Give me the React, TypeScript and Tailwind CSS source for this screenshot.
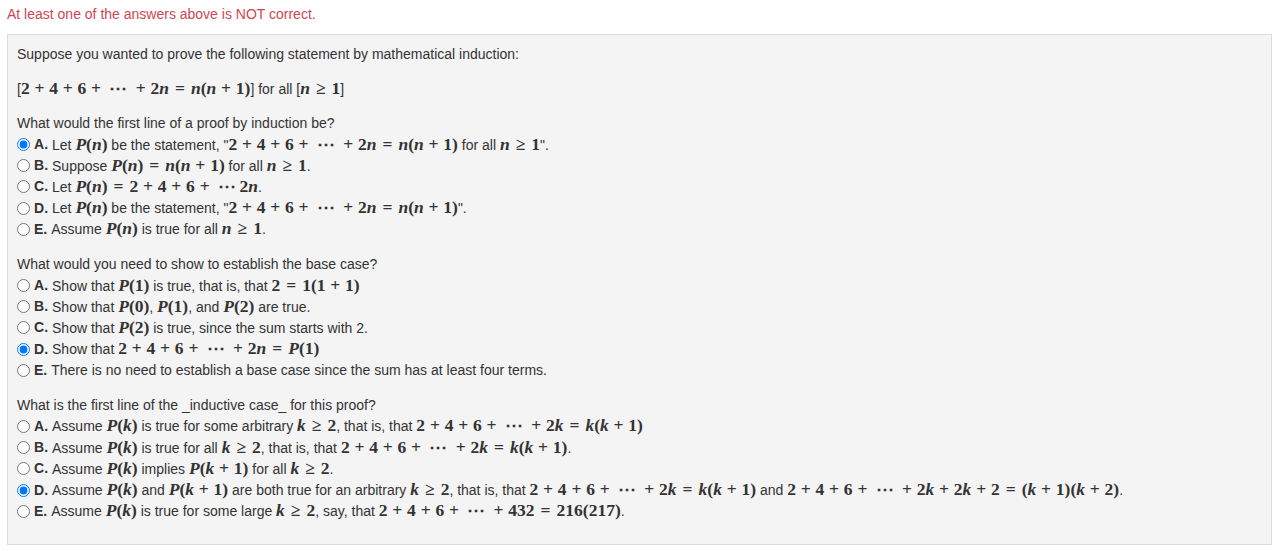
import React from 'react'

// tiny tex-ish renderer: letters italic, operators spaced
function M({ t }: { t: string }) {
  const parts: React.ReactNode[] = []
  for (let i = 0; i < t.length; i++) {
    const c = t[i]
    if (/[a-zA-Z]/.test(c)) {
      parts.push(<i key={i} className="italic">{c}</i>)
    } else if (c === '+') {
      parts.push(<span key={i} className="mx-[4.8px]">{c}</span>)
    } else if (c === '=' || c === '≥') {
      parts.push(<span key={i} className="mx-[6px]">{c}</span>)
    } else if (c === '⋯') {
      parts.push(<span key={i} className="mx-[3.5px]">{c}</span>)
    } else {
      parts.push(<span key={i}>{c}</span>)
    }
  }
  return (
    <span className="font-['Liberation_Serif',serif] font-bold text-[17.5px] leading-[20px] whitespace-nowrap">{parts}</span>
  )
}

type Opt = { key: string; body: React.ReactNode }

function Question({ title, options, picked, first }: { title: string; options: Opt[]; picked: string; first?: boolean }) {
  return (
    <div className={first ? 'mt-[13px]' : 'mt-[14px]'}>
      <p className="leading-[21px]">{title}</p>
      {options.map(o => (
        <label key={o.key} className="flex items-center h-[21.2px] whitespace-nowrap">
          <input type="radio" readOnly checked={o.key === picked} className="m-0 mr-[4px] w-[13px] h-[13px]" />
          <b className="font-bold">{o.key}.</b>
          <span className="ml-[4px]">{o.body}</span>
        </label>
      ))}
    </div>
  )
}

export default function App() {
  const q1: Opt[] = [
    { key: 'A', body: <>Let <M t="P(n)" /> be the statement, "<M t="2+4+6+⋯+2n=n(n+1)" /> for all <M t="n≥1" />".</> },
    { key: 'B', body: <>Suppose <M t="P(n)=n(n+1)" /> for all <M t="n≥1" />.</> },
    { key: 'C', body: <>Let <M t="P(n)=2+4+6+⋯2n" />.</> },
    { key: 'D', body: <>Let <M t="P(n)" /> be the statement, "<M t="2+4+6+⋯+2n=n(n+1)" />".</> },
    { key: 'E', body: <>Assume <M t="P(n)" /> is true for all <M t="n≥1" />.</> },
  ]
  const q2: Opt[] = [
    { key: 'A', body: <>Show that <M t="P(1)" /> is true, that is, that <M t="2=1(1+1)" /></> },
    { key: 'B', body: <>Show that <M t="P(0)" />, <M t="P(1)" />, and <M t="P(2)" /> are true.</> },
    { key: 'C', body: <>Show that <M t="P(2)" /> is true, since the sum starts with 2.</> },
    { key: 'D', body: <>Show that <M t="2+4+6+⋯+2n=P(1)" /></> },
    { key: 'E', body: <>There is no need to establish a base case since the sum has at least four terms.</> },
  ]
  const q3: Opt[] = [
    { key: 'A', body: <>Assume <M t="P(k)" /> is true for some arbitrary <M t="k≥2" />, that is, that <M t="2+4+6+⋯+2k=k(k+1)" /></> },
    { key: 'B', body: <>Assume <M t="P(k)" /> is true for all <M t="k≥2" />, that is, that <M t="2+4+6+⋯+2k=k(k+1)" />.</> },
    { key: 'C', body: <>Assume <M t="P(k)" /> implies <M t="P(k+1)" /> for all <M t="k≥2" />.</> },
    {
      key: 'D',
      body: (
        <>
          Assume <M t="P(k)" /> and <M t="P(k+1)" /> are both true for an arbitrary <M t="k≥2" />, that is, that{' '}
          <M t="2+4+6+⋯+2k=k(k+1)" /> and <M t="2+4+6+⋯+2k+2k+2=(k+1)(k+2)" />.
        </>
      ),
    },
    { key: 'E', body: <>Assume <M t="P(k)" /> is true for some large <M t="k≥2" />, say, that <M t="2+4+6+⋯+432=216(217)" />.</> },
  ]

  return (
    <div className="font-['Liberation_Sans',Arial,sans-serif] text-[14px] text-[#333] bg-white min-h-[551px] pt-[4px]">
      <p className="pl-[7px] leading-[20px] text-[#cf4652]">At least one of the answers above is NOT correct.</p>
      <div className="mt-[10px] ml-[7px] bg-[#f4f4f4] border border-[#dcdcdc] px-[9px] pt-[9px] pb-[22px]">
        <p className="leading-[21px]">Suppose you wanted to prove the following statement by mathematical induction:</p>
        <p className="mt-[13px] leading-[21px]">
          [<M t="2+4+6+⋯+2n=n(n+1)" />] for all [<M t="n≥1" />]
        </p>
        <Question first title="What would the first line of a proof by induction be?" options={q1} picked="A" />
        <Question title="What would you need to show to establish the base case?" options={q2} picked="D" />
        <Question title="What is the first line of the _inductive case_ for this proof?" options={q3} picked="D" />
      </div>
    </div>
  )
}
